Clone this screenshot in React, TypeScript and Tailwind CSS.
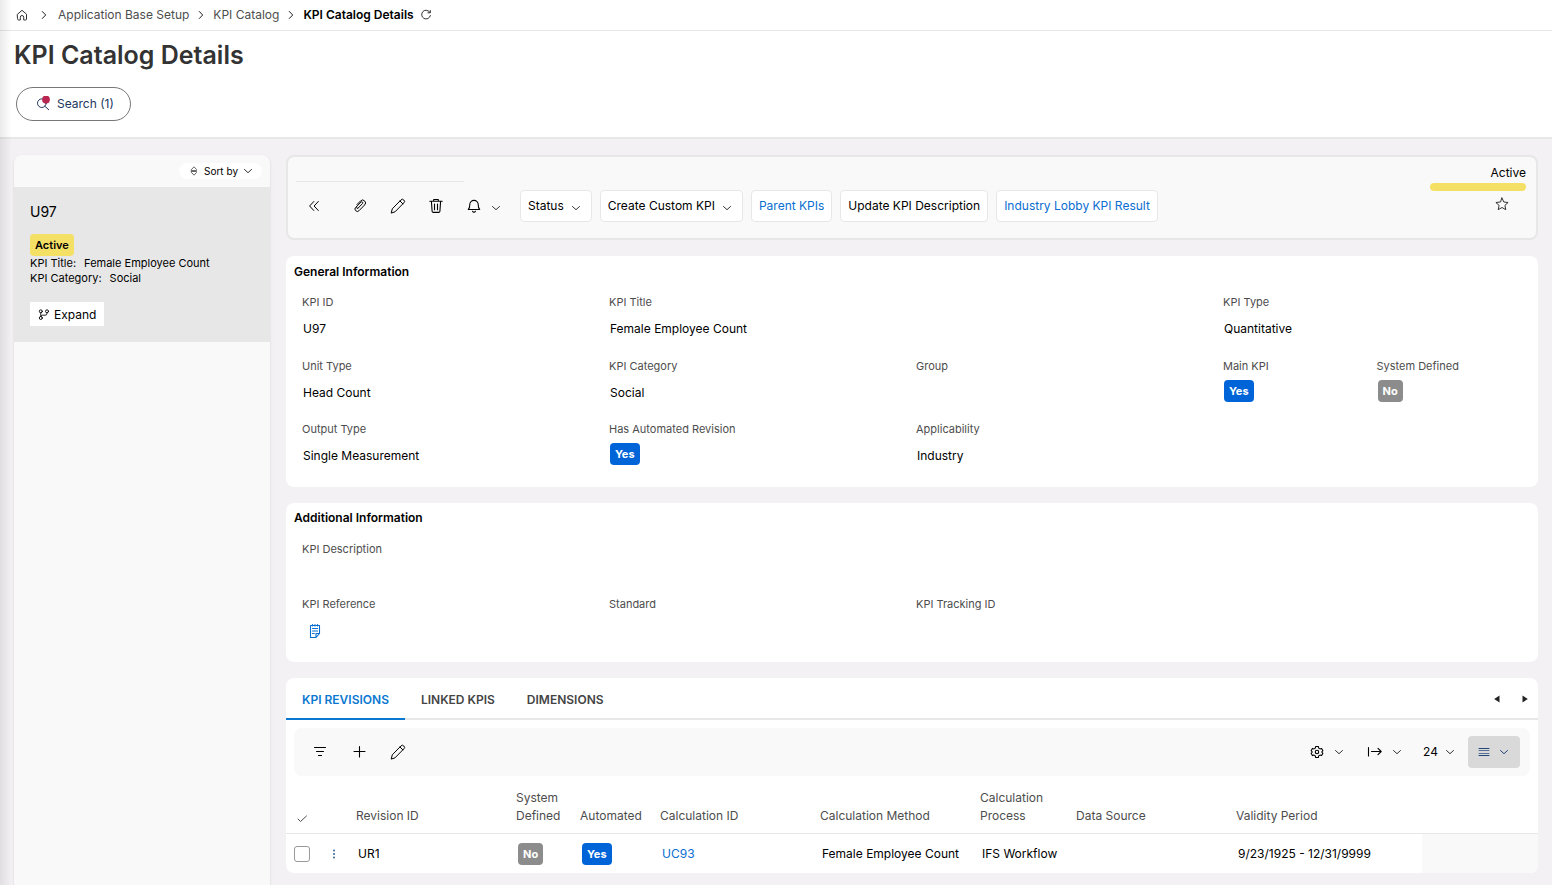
import type { ReactNode } from 'react';

type IconProps = { className?: string };

function Svg({ children, className = 'size-4', width = 1 }: { children: ReactNode; className?: string; width?: number }) {
  return (
    <svg
      viewBox="0 0 16 16"
      className={`shrink-0 ${className}`}
      fill="none"
      stroke="currentColor"
      strokeWidth={width}
      strokeLinecap="round"
      strokeLinejoin="round"
      aria-hidden="true"
    >
      {children}
    </svg>
  );
}

const HomeIcon = () => (
  <Svg>
    <path d="M3.500 7.200 8 3.300l4.500 3.900v4.800a1 1 0 0 1-1 1H9.700v-2.800a1.700 1.700 0 0 0-3.400 0V13H4.500a1 1 0 0 1-1-1z" />
  </Svg>
);
const CrumbChevron = () => (
  <Svg>
    <path d="M6.300 4.500 9.700 8l-3.400 3.500" />
  </Svg>
);
const ChevronDown = ({ className = 'size-4 text-[#333]' }: IconProps) => (
  <Svg className={className}>
    <path d="M4.500 6.500 8 9.700l3.500-3.200" />
  </Svg>
);
const RefreshIcon = () => (
  <Svg>
    <path d="M12 5.500A4.400 4.400 0 1 0 12.400 8.600M12.300 3.500v2.300H9.900" />
  </Svg>
);
const SearchIcon = () => (
  <Svg>
    <circle cx="6.800" cy="7.200" r="4.300" />
    <path d="m9.900 10.300 3.800 3.400" />
    <circle cx="11" cy="3.500" r="3.900" fill="#b9264f" stroke="none" />
  </Svg>
);
const SortIcon = () => (
  <Svg width={0.8} className="size-4 text-[#444]">
    <path d="M5.500 6.500 8 3.800l2.500 2.700v1h-5zM5.500 9.500 8 12.200l2.500-2.700v-1h-5z" />
  </Svg>
);
const BranchIcon = () => (
  <Svg width={0.9}>
    <circle cx="4.800" cy="4.300" r="1.500" />
    <circle cx="11" cy="4.300" r="1.500" />
    <circle cx="4.800" cy="11" r="1.500" />
    <path d="M4.800 5.800v3.700M11 5.800v.6a1.800 1.800 0 0 1-1.800 1.800H6.600a1.800 1.800 0 0 0-1.800 1.300" />
  </Svg>
);
const CollapseIcon = () => (
  <Svg>
    <path d="M7.800 3.500 3.600 8l4.200 4.500M12.300 3.500 8.100 8l4.200 4.500" />
  </Svg>
);
const ClipIcon = () => (
  <Svg>
    <path d="m5.900 10.300 4.600-4.700a1 1 0 0 0-1.500-1.500L3.700 9.400a2.300 2.300 0 0 0 0 3.300 2.300 2.300 0 0 0 3.300 0l5.600-5.700a2.800 2.800 0 0 0 0-4.100 2.800 2.800 0 0 0-4 0L5 6.500M5.900 10.300a.8.8 0 0 1-1.100-1.100" />
  </Svg>
);
const PencilIcon = () => (
  <Svg>
    <path d="M1.300 14.700 2.300 10.800 10.900 2a1.900 1.900 0 0 1 2.900 0 1.900 1.900 0 0 1 0 2.900L5.200 13.600zM10 3l2.900 2.900" />
  </Svg>
);
const TrashIcon = () => (
  <Svg width={1.1}>
    <path d="M1.800 3.300h12.400M5.700 3.300V1.500h4.600v1.800M3.400 3.300l.7 9.900a1.300 1.300 0 0 0 1.300 1.200h5.200a1.300 1.300 0 0 0 1.300-1.200l.7-9.900M6.500 6v5.800M9.500 6v5.800" />
  </Svg>
);
const BellIcon = () => (
  <Svg width={1.1}>
    <path d="M2.300 11.500c1.200-.9 1.500-2.100 1.500-4.900a4.200 4.200 0 0 1 8.400 0c0 2.800.3 4 1.500 4.900zM6.600 13.300a1.500 1.500 0 0 0 2.800 0" />
  </Svg>
);
const StarIcon = () => (
  <Svg>
    <path d="m8 2 1.800 4 4.300.5-3.200 2.900.9 4.300L8 11.500l-3.800 2.200.9-4.300L1.900 6.500 6.200 6z" />
  </Svg>
);
const NoteIcon = () => (
  <Svg className="mt-[5px] size-4" width={1.1}>
    <path d="M3.500 2.500h9v8l-3.500 4H3.500zM12.500 10.500H9v4M5.500 1.500v1.500M8 1.500v1.500M10.500 1.500v1.500M5.500 5.500h5M5.500 8h5M5.500 10.500h1.800" />
  </Svg>
);
const FilterIcon = () => (
  <Svg width={1.1}>
    <path d="M2.500 3.500h11M4.500 7.500h7M6.500 11.500h3" />
  </Svg>
);
const PlusIcon = () => (
  <Svg width={1.1}>
    <path d="M8.500 2.500v10.500M3 7.500h11" />
  </Svg>
);
const GearIcon = () => (
  <Svg width={1.1}>
    <path d="M6.700 2.500h2.600l.4 1.600 1.300.8 1.600-.5 1.300 2.300L12.700 8l1.200 1.300-1.300 2.300-1.600-.5-1.300.8-.4 1.600H6.700l-.4-1.600-1.300-.8-1.600.5-1.300-2.300L3.300 8 2.100 6.700l1.300-2.300 1.600.5 1.300-.8z" />
    <circle cx="8" cy="8" r="1.700" />
  </Svg>
);
const ExportIcon = () => (
  <Svg width={1.1}>
    <path d="M1.500 3.500v8.500M4.500 7.500h9.700M11 4.300l3.200 3.200-3.200 3.200" />
  </Svg>
);
const RowsIcon = () => (
  <Svg>
    <path d="M3 4.500h10M3 11.500h10" />
    <path d="M3 6.500h10M3 9.500h10" strokeOpacity="0.700" />
  </Svg>
);
const CheckIcon = () => (
  <Svg>
    <path d="m4 9 2.500 2.500L12.500 6" />
  </Svg>
);
const DotsIcon = () => (
  <Svg>
    <path d="M8 4.500h.01M8 8h.01M8 11.500h.01" strokeWidth="1.800" />
  </Svg>
);

function Badge({ value }: { value: 'Yes' | 'No' }) {
  return (
    <span
      className={`inline-flex h-[22px] items-center rounded px-[5px] text-[11px] leading-4 font-bold text-white ${value === 'Yes' ? 'bg-[#0064d9]' : 'bg-[#8c8c8c]'}`}
    >
      {value}
    </span>
  );
}

function Field({ label, children, span }: { label: string; children?: ReactNode; span: string }) {
  return (
    <div className={`px-2 ${span}`}>
      <dt className="text-[11px] leading-4 text-[#4d4d4d]">{label}</dt>
      <dd className="mt-1.5 flex h-6 items-start pl-px leading-[26px]">{children}</dd>
    </div>
  );
}

function ActionButton({ children, menu, link }: { children: ReactNode; menu?: boolean; link?: boolean }) {
  return (
    <button
      type="button"
      className={`flex h-8 items-center gap-1 rounded border border-[#e7e7e7] bg-white px-[7px] whitespace-nowrap ${link ? 'text-[#0a6ed1]' : 'text-black'}`}
    >
      {children}
      {menu && <ChevronDown className="mt-1 size-4 text-[#333]" />}
    </button>
  );
}

function IconButton({ label, children, className = 'w-[38px]' }: { label: string; children: ReactNode; className?: string }) {
  return (
    <button type="button" aria-label={label} className={`flex h-8 shrink-0 items-center justify-center ${className}`}>
      {children}
    </button>
  );
}

const headers = ['Revision ID', 'System Defined', 'Automated', 'Calculation ID', 'Calculation Method', 'Calculation Process', 'Data Source', 'Validity Period'];
const cells: ReactNode[] = [
  'UR1',
  <Badge value="No" />,
  <Badge value="Yes" />,
  <a href="#uc93" className="text-[#0a6ed1]">UC93</a>,
  'Female Employee Count',
  'IFS Workflow',
  '',
  '9/23/1925 - 12/31/9999',
];

export default function App() {
  return (
    <div className="relative flex min-h-screen flex-col bg-[#f3f1f4] font-['Inter',sans-serif] text-[12px] leading-4 text-black">
      <nav aria-label="Breadcrumb" className="flex h-[31px] items-center border-b border-[#e7e7e7] bg-white pl-3.5 text-[#4d4d4d]">
        <a href="#home" aria-label="Home" className="text-[#333]"><HomeIcon /></a>
        <span className="mx-1.5 text-[#222]"><CrumbChevron /></span>
        <a href="#setup">Application Base Setup</a>
        <span className="mx-1 text-[#222]"><CrumbChevron /></span>
        <a href="#catalog">KPI Catalog</a>
        <span className="mx-1 text-[#222]"><CrumbChevron /></span>
        <span className="font-semibold text-black" aria-current="page">KPI Catalog Details</span>
        <button type="button" aria-label="Refresh" className="ml-1 text-[#333]"><RefreshIcon /></button>
      </nav>

      <header className="flex h-[108px] flex-col items-start border-b-2 border-[#e7e7e7] bg-white px-3.5 pt-2">
        <h1 className="text-[25px] leading-8 font-semibold text-[#333]">KPI Catalog Details</h1>
        <button type="button" className="mt-4 ml-0.5 flex h-[34px] items-center gap-1.5 rounded-full border border-[#777] bg-white pr-4 pl-[18px] text-[#22365e]">
          <SearchIcon />
          Search (1)
        </button>
      </header>

      <div className="flex flex-1 gap-4 px-3.5 pt-4">
        <aside className="w-64 shrink-0 rounded-t-lg bg-[#f9f9f9] shadow">
          <div className="flex h-8 items-center justify-end pr-2">
            <button type="button" className="flex h-4 items-center gap-0.5 rounded-full bg-white pr-1.5 pl-[7px] text-[10px]">
              <SortIcon />
              <span>Sort by</span>
              <ChevronDown />
            </button>
          </div>
          <article className="h-[155px] bg-[#e7e7e7] px-4 pt-4">
            <h2 className="text-[14px] leading-[18px]">U97</h2>
            <div className="mt-[13px] flex">
              <span className="flex h-[22px] items-center rounded bg-[#f5e066] px-[5px] text-[11px] font-semibold">Active</span>
            </div>
            <dl className="text-[11px] leading-[15px]">
              <div className="flex gap-2"><dt>KPI Title:</dt><dd>Female Employee Count</dd></div>
              <div className="flex gap-2"><dt>KPI Category:</dt><dd>Social</dd></div>
            </dl>
            <button type="button" className="mt-4 flex h-6 items-center gap-0.5 bg-white pt-px pr-2 pl-1.5">
              <BranchIcon />
              Expand
            </button>
          </article>
        </aside>

        <main className="flex min-w-0 flex-1 flex-col gap-4 pb-3">
          <section aria-label="Record actions" className="flex h-[85px] justify-between rounded-lg border-2 border-[#e7e7e7] bg-[#f9f9f9]">
            <div className="pt-6 pl-2">
              <div className="mb-2 w-[168px] border-t border-[#e7e7e7]" />
              <div className="flex">
                <IconButton label="Collapse list" className="mr-2 w-9"><CollapseIcon /></IconButton>
                <IconButton label="Attachments" className="w-10"><ClipIcon /></IconButton>
                <IconButton label="Edit" className="w-9"><PencilIcon /></IconButton>
                <IconButton label="Delete" className="w-10"><TrashIcon /></IconButton>
                <button type="button" aria-label="Notifications" className="mr-4 flex h-8 w-12 items-center justify-end gap-1.5">
                  <BellIcon />
                  <ChevronDown className="mt-1 size-4 text-[#333]" />
                </button>
                <div className="flex gap-2">
                  <ActionButton menu>Status</ActionButton>
                  <ActionButton menu>Create Custom KPI</ActionButton>
                  <ActionButton link>Parent KPIs</ActionButton>
                  <ActionButton>Update KPI Description</ActionButton>
                  <ActionButton link>Industry Lobby KPI Result</ActionButton>
                </div>
              </div>
            </div>
            <div className="mr-2.5 flex w-24 shrink-0 flex-col items-end pt-2">
              <span>Active</span>
              <span className="mt-0.5 h-2 w-full rounded-full bg-[#f5e066]" />
              <button type="button" aria-label="Favourite" className="mt-[5px] mr-4 text-[#333]"><StarIcon /></button>
            </div>
          </section>

          <section className="h-[231px] rounded-lg bg-white pt-2 pr-4 pl-2">
            <h2 className="font-semibold">General Information</h2>
            <dl className="mt-3.5 grid grid-cols-8 grid-rows-[64px_63px_63px]">
              <Field label="KPI ID" span="col-span-2">U97</Field>
              <Field label="KPI Title" span="col-span-4">Female Employee Count</Field>
              <Field label="KPI Type" span="col-span-2">Quantitative</Field>
              <Field label="Unit Type" span="col-span-2">Head Count</Field>
              <Field label="KPI Category" span="col-span-2">Social</Field>
              <Field label="Group" span="col-span-2" />
              <Field label="Main KPI" span="col-span-1"><Badge value="Yes" /></Field>
              <Field label="System Defined" span="col-span-1"><Badge value="No" /></Field>
              <Field label="Output Type" span="col-span-2">Single Measurement</Field>
              <Field label="Has Automated Revision" span="col-span-2"><Badge value="Yes" /></Field>
              <Field label="Applicability" span="col-span-2">Industry</Field>
            </dl>
          </section>

          <section className="h-[159px] rounded-lg bg-white pt-[7px] pr-4 pl-2">
            <h2 className="font-semibold">Additional Information</h2>
            <dl className="mt-[15px] grid grid-cols-8 gap-y-[9px]">
              <Field label="KPI Description" span="col-span-8" />
              <Field label="KPI Reference" span="col-span-2">
                <button type="button" aria-label="Open reference note" className="ml-1 text-[#0a6ed1]"><NoteIcon /></button>
              </Field>
              <Field label="Standard" span="col-span-2" />
              <Field label="KPI Tracking ID" span="col-span-2" />
            </dl>
          </section>

          <section className="overflow-hidden rounded-lg bg-white">
            <div className="flex h-[42px] items-stretch border-b-2 border-[#e7e7e7] font-semibold text-[#444]">
              <div role="tablist" className="-mb-0.5 flex">
                <button type="button" role="tab" aria-selected="true" className="border-b-2 border-[#0a78d1] px-4 pt-1 text-[#0a78d1]">KPI REVISIONS</button>
                <button type="button" role="tab" aria-selected="false" className="px-4 pt-1 pb-0.5">LINKED KPIS</button>
                <button type="button" role="tab" aria-selected="false" className="px-4 pt-1 pb-0.5">DIMENSIONS</button>
              </div>
              <div className="ml-auto flex items-center gap-3 pt-px pr-[5px] text-[#222]">
                <button type="button" aria-label="Previous tab">
                  <svg viewBox="0 0 16 16" className="size-4" fill="currentColor"><path d="M10.500 4.500v7L5.200 8z" /></svg>
                </button>
                <button type="button" aria-label="Next tab">
                  <svg viewBox="0 0 16 16" className="size-4" fill="currentColor"><path d="M5.500 4.500v7L10.800 8z" /></svg>
                </button>
              </div>
            </div>

            <div role="toolbar" aria-label="Revision tools" className="mx-2 mt-2 flex h-12 items-center rounded-lg bg-[#f9f9f9] pr-2.5 pl-[7px]">
              <IconButton label="Filter"><FilterIcon /></IconButton>
              <IconButton label="Add" className="w-10"><PlusIcon /></IconButton>
              <IconButton label="Edit revision"><PencilIcon /></IconButton>
              <button type="button" aria-label="Settings" className="ml-auto flex h-8 items-center gap-1.5"><GearIcon /><ChevronDown /></button>
              <button type="button" aria-label="Export" className="ml-5 flex h-8 items-center gap-1.5"><ExportIcon /><ChevronDown /></button>
              <button type="button" aria-label="Rows per page" className="ml-[18px] flex h-8 items-center gap-1">24<ChevronDown /></button>
              <button type="button" aria-label="Row density" className="ml-2.5 flex h-8 w-[52px] items-center justify-center gap-1 rounded bg-[#d9d9d9] text-[#22457a]"><RowsIcon /><ChevronDown className="size-4" /></button>
            </div>

            <table className="w-full table-fixed border-collapse text-left">
              <colgroup>
                <col className="w-8" />
                <col className="w-[30px]" />
                <col className="w-[160px]" />
                <col className="w-16" />
                <col className="w-20" />
                <col className="w-[160px]" />
                <col className="w-[160px]" />
                <col className="w-24" />
                <col className="w-[160px]" />
                <col className="w-[194px]" />
                <col />
              </colgroup>
              <thead>
                <tr className="h-[57px] border-b border-[#e7e7e7] align-bottom leading-[18px] text-[#4d4d4d]">
                  <th className="pb-[7px] pl-2"><CheckIcon /></th>
                  <th />
                  {headers.map((h) => (
                    <th key={h} className="pb-2 pl-2 font-normal">{h}</th>
                  ))}
                  <th />
                </tr>
              </thead>
              <tbody>
                <tr className="h-10">
                  <td className="pt-0.5 pl-2">
                    <input type="checkbox" aria-label="Select UR1" className="block size-4 appearance-none rounded-[3px] border border-[#999] bg-white" />
                  </td>
                  <td className="pt-0.5 pl-2">
                    <button type="button" aria-label="Row menu" className="block text-[#22598f]"><DotsIcon /></button>
                  </td>
                  {cells.map((c, i) => (
                    <td key={headers[i]} className="pt-0.5 pl-2.5 whitespace-nowrap">{c}</td>
                  ))}
                  <td className="bg-[#f9f9f9]" />
                </tr>
              </tbody>
            </table>
          </section>
        </main>
      </div>
      <div className="pointer-events-none absolute inset-y-0 left-0 w-3 bg-linear-to-r from-black/8 to-transparent" />
    </div>
  );
}
